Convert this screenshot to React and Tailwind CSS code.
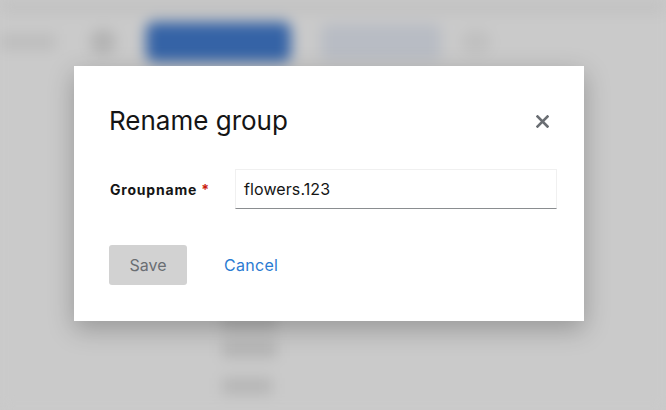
import React from "react";

function BackdropPage() {
  return (
    <div className="flex h-full w-full flex-col bg-[#cacaca] blur-[7px]">
      <div className="h-[14px] w-full bg-[#c2c2c2]" />
      <div className="flex h-[48px] items-center pt-[8px]">
        <div className="h-[16px] w-[56px] bg-[#bdbdbd]" />
        <div className="ml-[34px] h-[26px] w-[26px] rounded-full bg-[#b3b3b3]" />
        <div className="ml-[30px] h-[40px] w-[145px] rounded-[8px] bg-[#3563a6]" />
        <div className="ml-[30px] h-[36px] w-[120px] rounded-[6px] bg-[#b8bcc4]" />
        <div className="ml-[20px] h-[24px] w-[30px] rounded-full bg-[#c0c0c0]" />
      </div>
      <div className="flex flex-1 pl-[222px] pt-[252px]">
        <div className="flex flex-col gap-[10px]">
          <div className="h-[16px] w-[55px] bg-[#b5b5b5]" />
          <div className="h-[18px] w-[55px] bg-[#b5b5b5]" />
          <div className="mt-[10px] h-[16px] w-[50px] bg-[#b5b5b5]" />
        </div>
      </div>
    </div>
  );
}

function CloseIcon() {
  return (
    <svg width="13" height="13" viewBox="0 0 13 13" aria-hidden="true">
      <path d="M1.5 1.5 L11.5 11.5 M11.5 1.5 L1.5 11.5" stroke="#6a6e73" strokeWidth="2.6" strokeLinecap="square" />
    </svg>
  );
}

export default function App() {
  return (
    <div className="relative h-[410px] w-[666px] overflow-hidden bg-[#cacaca]">
      <BackdropPage />
      <div className="absolute inset-0 flex items-start pl-[74px] pt-[66px]">
        <div
          className="flex h-[255px] w-[510px] flex-col bg-white px-[35px] pt-[38px] shadow-[0_8px_24px_rgba(0,0,0,0.25)]"
          style={{ fontFamily: "Inter, 'Noto Sans', sans-serif" }}
        >
          <div className="flex items-center justify-between">
            <h1 className="text-[26px] leading-[34px] font-normal tracking-[0px] text-[#151515]">
              Rename group
            </h1>
            <button className="mr-[-3px] flex h-[20px] w-[20px] items-center justify-center">
              <CloseIcon />
            </button>
          </div>
          <div className="mr-[-8px] mt-[31px] flex items-center">
            <label className="w-[126px] shrink-0 pl-[1px] text-[14px] font-bold tracking-[0.8px] text-[#151515]">
              Groupname <span className="text-[#c9190b]">*</span>
            </label>
            <div className="flex h-[40px] flex-1 items-center border border-[#f0f0f0] border-b-[#8a8d90] px-[8px] text-[16px] tracking-[0.1px] text-[#151515]">
              flowers.123
            </div>
          </div>
          <div className="mt-[36px] flex items-center gap-[37px]">
            <button className="h-[40px] w-[78px] rounded-[3px] bg-[#d2d2d2] text-[16px] text-[#6a6e73]">
              Save
            </button>
            <button className="text-[16px] tracking-[0.3px] text-[#2b7bd2]">Cancel</button>
          </div>
        </div>
      </div>
    </div>
  );
}
